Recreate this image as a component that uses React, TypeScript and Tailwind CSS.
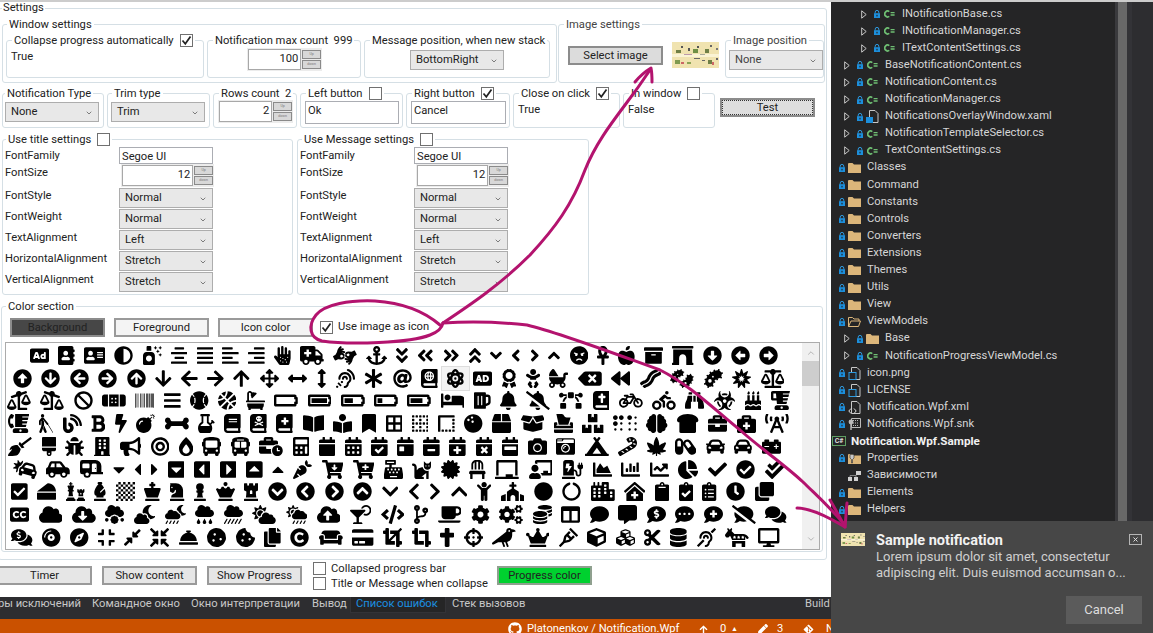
import React from "react";
import { ChevronDown, ChevronUp } from "lucide-react";
import type { IconType } from "react-icons";
import {
  FaAd, FaAddressBook, FaAddressCard, FaAdjust, FaAirFreshener, FaAlignCenter, FaAlignJustify, FaAlignLeft, FaAlignRight, FaAllergies, FaAmbulance, FaAmericanSignLanguageInterpreting, FaAnchor, FaAngleDoubleDown, FaAngleDoubleLeft, FaAngleDoubleRight, FaAngleDoubleUp, FaAngleDown, FaAngleLeft, FaAngleRight, FaAngleUp, FaAngry, FaAnkh, FaAppleAlt, FaArchive, FaArchway, FaArrowAltCircleDown, FaArrowAltCircleLeft, FaArrowAltCircleRight,
  FaArrowAltCircleUp, FaArrowCircleDown, FaArrowCircleLeft, FaArrowCircleRight, FaArrowCircleUp, FaArrowDown, FaArrowLeft, FaArrowRight, FaArrowUp, FaArrowsAlt, FaArrowsAltH, FaArrowsAltV, FaAssistiveListeningSystems, FaAsterisk, FaAt, FaAtlas, FaAtom, FaAudioDescription, FaAward, FaBaby, FaBabyCarriage, FaBackspace, FaBackward, FaBacon, FaBacteria, FaBacterium, FaBahai, FaBalanceScale,
  FaBalanceScaleLeft, FaBalanceScaleRight, FaBan, FaBandAid, FaBarcode, FaBars, FaBaseballBall, FaBasketballBall, FaBath, FaBatteryEmpty, FaBatteryFull, FaBatteryHalf, FaBatteryQuarter, FaBatteryThreeQuarters, FaBed, FaBeer, FaBell, FaBellSlash, FaBezierCurve, FaBible, FaBicycle, FaBiking, FaBinoculars, FaBiohazard, FaBirthdayCake, FaBlender,
  FaBlenderPhone, FaBlind, FaBlog, FaBold, FaBolt, FaBomb, FaBone, FaBong, FaBook, FaBookDead, FaBookMedical, FaBookOpen, FaBookReader, FaBookmark, FaBorderAll, FaBorderNone, FaBorderStyle, FaBowlingBall, FaBox, FaBoxOpen, FaBoxTissue, FaBoxes, FaBraille, FaBrain, FaBreadSlice, FaBriefcase, FaBriefcaseMedical, FaBroadcastTower,
  FaBroom, FaBrush, FaBug, FaBuilding, FaBullhorn, FaBullseye, FaBurn, FaBus, FaBusAlt, FaBusinessTime, FaCalculator, FaCalendar, FaCalendarAlt, FaCalendarCheck, FaCalendarDay, FaCalendarMinus, FaCalendarPlus, FaCalendarTimes, FaCalendarWeek, FaCamera, FaCameraRetro, FaCampground, FaCandyCane, FaCannabis, FaCapsules, FaCar, FaCarAlt, FaCarBattery,
  FaCarCrash, FaCarSide, FaCaravan, FaCaretDown, FaCaretLeft, FaCaretRight, FaCaretSquareDown, FaCaretSquareLeft, FaCaretSquareRight, FaCaretSquareUp, FaCaretUp, FaCarrot, FaCartArrowDown, FaCartPlus, FaCashRegister, FaCat, FaCertificate, FaChair, FaChalkboard, FaChalkboardTeacher, FaChargingStation, FaChartArea, FaChartBar, FaChartLine, FaChartPie, FaCheck, FaCheckCircle, FaCheckDouble,
  FaCheckSquare, FaCheese, FaChess, FaChessBishop, FaChessBoard, FaChessKing, FaChessKnight, FaChessPawn, FaChessQueen, FaChessRook, FaChevronCircleDown, FaChevronCircleLeft, FaChevronCircleRight, FaChevronCircleUp, FaChevronDown, FaChevronLeft, FaChevronRight, FaChevronUp, FaChild, FaChurch, FaCircle, FaCircleNotch, FaCity, FaClinicMedical, FaClipboard, FaClipboardCheck, FaClipboardList, FaClock, FaClone,
  FaClosedCaptioning, FaCloud, FaCloudDownloadAlt, FaCloudMeatball, FaCloudMoon, FaCloudMoonRain, FaCloudRain, FaCloudShowersHeavy, FaCloudSun, FaCloudSunRain, FaCloudUploadAlt, FaCocktail, FaCode, FaCodeBranch, FaCoffee, FaCog, FaCogs, FaCoins, FaColumns, FaComment, FaCommentAlt, FaCommentDollar, FaCommentDots, FaCommentMedical, FaCommentSlash, FaComments,
  FaCommentsDollar, FaCompactDisc, FaCompass, FaCompress, FaCompressAlt, FaCompressArrowsAlt, FaConciergeBell, FaCookie, FaCookieBite, FaCopy, FaCopyright, FaCouch, FaCreditCard, FaCrop, FaCropAlt, FaCross, FaCrosshairs, FaCrow, FaCrown, FaCrutch, FaCube, FaCubes, FaCut, FaDatabase, FaDeaf, FaDemocrat, FaDesktop,
  FaGithub, FaPen, FaGitAlt,
} from "react-icons/fa";

// -------- icon list (Font Awesome solid, in the alphabetical order of the picker) --------

const iconRows: IconType[][] = [
  [FaAd, FaAddressBook, FaAddressCard, FaAdjust, FaAirFreshener, FaAlignCenter, FaAlignJustify, FaAlignLeft, FaAlignRight, FaAllergies, FaAmbulance, FaAmericanSignLanguageInterpreting, FaAnchor, FaAngleDoubleDown, FaAngleDoubleLeft, FaAngleDoubleRight, FaAngleDoubleUp, FaAngleDown, FaAngleLeft, FaAngleRight, FaAngleUp, FaAngry, FaAnkh, FaAppleAlt, FaArchive, FaArchway, FaArrowAltCircleDown, FaArrowAltCircleLeft, FaArrowAltCircleRight],
  [FaArrowAltCircleUp, FaArrowCircleDown, FaArrowCircleLeft, FaArrowCircleRight, FaArrowCircleUp, FaArrowDown, FaArrowLeft, FaArrowRight, FaArrowUp, FaArrowsAlt, FaArrowsAltH, FaArrowsAltV, FaAssistiveListeningSystems, FaAsterisk, FaAt, FaAtlas, FaAtom, FaAudioDescription, FaAward, FaBaby, FaBabyCarriage, FaBackspace, FaBackward, FaBacon, FaBacteria, FaBacterium, FaBahai, FaBalanceScale],
  [FaBalanceScaleLeft, FaBalanceScaleRight, FaBan, FaBandAid, FaBarcode, FaBars, FaBaseballBall, FaBasketballBall, FaBath, FaBatteryEmpty, FaBatteryFull, FaBatteryHalf, FaBatteryQuarter, FaBatteryThreeQuarters, FaBed, FaBeer, FaBell, FaBellSlash, FaBezierCurve, FaBible, FaBicycle, FaBiking, FaBinoculars, FaBiohazard, FaBirthdayCake, FaBlender],
  [FaBlenderPhone, FaBlind, FaBlog, FaBold, FaBolt, FaBomb, FaBone, FaBong, FaBook, FaBookDead, FaBookMedical, FaBookOpen, FaBookReader, FaBookmark, FaBorderAll, FaBorderNone, FaBorderStyle, FaBowlingBall, FaBox, FaBoxOpen, FaBoxTissue, FaBoxes, FaBraille, FaBrain, FaBreadSlice, FaBriefcase, FaBriefcaseMedical, FaBroadcastTower],
  [FaBroom, FaBrush, FaBug, FaBuilding, FaBullhorn, FaBullseye, FaBurn, FaBus, FaBusAlt, FaBusinessTime, FaCalculator, FaCalendar, FaCalendarAlt, FaCalendarCheck, FaCalendarDay, FaCalendarMinus, FaCalendarPlus, FaCalendarTimes, FaCalendarWeek, FaCamera, FaCameraRetro, FaCampground, FaCandyCane, FaCannabis, FaCapsules, FaCar, FaCarAlt, FaCarBattery],
  [FaCarCrash, FaCarSide, FaCaravan, FaCaretDown, FaCaretLeft, FaCaretRight, FaCaretSquareDown, FaCaretSquareLeft, FaCaretSquareRight, FaCaretSquareUp, FaCaretUp, FaCarrot, FaCartArrowDown, FaCartPlus, FaCashRegister, FaCat, FaCertificate, FaChair, FaChalkboard, FaChalkboardTeacher, FaChargingStation, FaChartArea, FaChartBar, FaChartLine, FaChartPie, FaCheck, FaCheckCircle, FaCheckDouble],
  [FaCheckSquare, FaCheese, FaChess, FaChessBishop, FaChessBoard, FaChessKing, FaChessKnight, FaChessPawn, FaChessQueen, FaChessRook, FaChevronCircleDown, FaChevronCircleLeft, FaChevronCircleRight, FaChevronCircleUp, FaChevronDown, FaChevronLeft, FaChevronRight, FaChevronUp, FaChild, FaChurch, FaCircle, FaCircleNotch, FaCity, FaClinicMedical, FaClipboard, FaClipboardCheck, FaClipboardList, FaClock, FaClone],
  [FaClosedCaptioning, FaCloud, FaCloudDownloadAlt, FaCloudMeatball, FaCloudMoon, FaCloudMoonRain, FaCloudRain, FaCloudShowersHeavy, FaCloudSun, FaCloudSunRain, FaCloudUploadAlt, FaCocktail, FaCode, FaCodeBranch, FaCoffee, FaCog, FaCogs, FaCoins, FaColumns, FaComment, FaCommentAlt, FaCommentDollar, FaCommentDots, FaCommentMedical, FaCommentSlash, FaComments],
  [FaCommentsDollar, FaCompactDisc, FaCompass, FaCompress, FaCompressAlt, FaCompressArrowsAlt, FaConciergeBell, FaCookie, FaCookieBite, FaCopy, FaCopyright, FaCouch, FaCreditCard, FaCrop, FaCropAlt, FaCross, FaCrosshairs, FaCrow, FaCrown, FaCrutch, FaCube, FaCubes, FaCut, FaDatabase, FaDeaf, FaDemocrat, FaDesktop],
];

// rows are centred, these nudge the ones that sit off the common centre
const rowNudge = ["pl-[11px]", "", "", "", "pr-[8px]", "", "pr-[12px]", "", "pr-[6px]"];

// -------- small WPF-looking controls --------

function Check({ on = false }: { on?: boolean }) {
  return (
    <span className="inline-flex w-[13px] h-[13px] shrink-0 items-center justify-center border border-[#707070] bg-white">
      {on && (
        <svg width="11" height="11" viewBox="0 0 11 11">
          <path d="M1.5 5.5 L4.3 8.8 L9.5 1.5" fill="none" stroke="#222" strokeWidth="1.7" />
        </svg>
      )}
    </span>
  );
}

function Group({
  title,
  className = "",
  inset = "ml-[5px]",
  children,
}: {
  title: React.ReactNode;
  className?: string;
  inset?: string;
  children?: React.ReactNode;
}) {
  return (
    <fieldset className={"border border-[#d5dfe5] rounded-[3px] min-w-0 shrink-0 " + className}>
      <legend className={"h-4 px-[2px] pt-px flex items-center gap-[6px] leading-4 whitespace-nowrap " + inset}>{title}</legend>
      {children}
    </fieldset>
  );
}

function Select({ value, className = "" }: { value: string; className?: string }) {
  return (
    <div className={"h-5 w-[94px] flex items-center justify-between pl-[5px] pr-[5px] pt-px bg-[#e8e8e8] border border-[#adadad] " + className}>
      <span>{value}</span>
      <ChevronDown size={8} strokeWidth={2.5} className="text-[#666]" />
    </div>
  );
}

function Spinner({ value, className = "", boxWidth }: { value: string; className?: string; boxWidth: string }) {
  return (
    <div className={"flex h-[23px] items-stretch p-px bg-[#ececec] " + className}>
      <div className={"flex items-center justify-end pr-[2px] bg-white border border-[#a8a8a8] " + boxWidth}>{value}</div>
      <div className="w-[19px] ml-px flex flex-col gap-px py-[1px] text-[3.5px] leading-none text-[#777] text-center">
        <div className="flex-1 flex items-center justify-center bg-[#d8d8d8] border border-[#8a8a8a]">Up</div>
        <div className="flex-1 flex items-center justify-center bg-[#d8d8d8] border border-[#8a8a8a]">down</div>
      </div>
    </div>
  );
}

function TextBox({ value, className = "" }: { value: string; className?: string }) {
  return <div className={"bg-white border border-[#abadb3] px-[2px] pt-px leading-[15px] " + className}>{value}</div>;
}

// every button passes its own fill and border colour
function Btn({ children, className = "" }: { children: React.ReactNode; className?: string }) {
  return (
    <div className={"h-[19px] w-[95px] shrink-0 flex items-center justify-center pt-px border-2 " + className}>
      {children}
    </div>
  );
}

// tiny picture that the user selected as the notification image
function Thumb({ className = "" }: { className?: string }) {
  const marks = [
    [4, 8, 5, 3, "#6f7f46"], [9, 4, 2, 2, "#555"], [16, 6, 2, 3, "#555"], [21, 7, 5, 4, "#6f8f45"], [25, 4, 2, 2, "#555"],
    [33, 7, 4, 4, "#6f7f46"], [38, 3, 2, 2, "#666"], [44, 6, 2, 2, "#777"], [3, 18, 5, 4, "#7f9a50"], [9, 20, 3, 2, "#c66"],
    [15, 20, 4, 2, "#8aa456"], [22, 16, 6, 1, "#666"], [30, 18, 3, 1, "#666"], [36, 18, 4, 4, "#6f7f46"], [40, 20, 2, 3, "#c66"],
    [12, 12, 8, 1, "#b9a"], [28, 12, 5, 1, "#aa9"], [44, 16, 2, 2, "#666"],
  ] as const;
  return (
    <svg viewBox="0 0 47 26" preserveAspectRatio="none" className={className}>
      <rect width="47" height="26" fill="#f0e3b0" />
      <rect y="12" width="47" height="3" fill="#faf3d4" />
      {marks.map(([x, y, w, h, c], i) => (
        <rect key={i} x={x} y={y} width={w} height={h} fill={c} />
      ))}
    </svg>
  );
}

// -------- solution explorer --------

function Triangle() {
  return (
    <svg width="6" height="9" viewBox="0 0 6 9">
      <path d="M0.7 0.8 L5.2 4.5 L0.7 8.2 Z" fill="none" stroke="#c8c8c8" strokeWidth="1" />
    </svg>
  );
}

function Lock() {
  return (
    <svg width="6" height="8" viewBox="0 0 6 8">
      <path d="M1.2 3.4 V2.2 A1.8 1.8 0 0 1 4.8 2.2 V3.4" fill="none" stroke="#2f9be0" strokeWidth="1" />
      <rect y="3.2" width="6" height="4.8" fill="#1c8fdc" />
      <rect x="2.4" y="4.8" width="1.2" height="1.6" fill="#252526" />
    </svg>
  );
}

function FileIcon({ kind }: { kind: string }) {
  if (kind === "cs")
    return (
      <svg width="11" height="8" viewBox="0 0 11 8">
        <path d="M5.3 1.6 A2.9 2.9 0 1 0 5.3 6.4" fill="none" stroke="#6fbf73" strokeWidth="1.7" />
        <path d="M6.6 2.6 H10.6 M6.6 5 H10.6" stroke="#6fbf73" strokeWidth="1.3" />
      </svg>
    );
  if (kind === "folder")
    return (
      <svg width="13" height="10" viewBox="0 0 13 10">
        <path d="M0 1 Q0 0 1 0 H4.5 L6 1.5 H13 V10 H0 Z" fill="#dcb67a" />
      </svg>
    );
  if (kind === "open")
    return (
      <svg width="13" height="10" viewBox="0 0 13 10">
        <path d="M0.5 9.5 V0.5 H4.5 L6 2 H11 V4 M0.5 9.5 H10.5 L12.5 4 H3 L0.5 9.5 Z" fill="#252526" stroke="#dcb67a" strokeWidth="1" />
      </svg>
    );
  if (kind === "prop")
    return (
      <svg width="13" height="11" viewBox="0 0 13 11">
        <path d="M0 2 Q0 1 1 1 H4.5 L6 2.5 H13 V11 H0 Z" fill="#dcb67a" />
        <path d="M2 1.5 H6 V5 L4.5 6.5 V10 H3.5 V6.5 L2 5 Z" fill="#c8c8c8" stroke="#252526" strokeWidth=".6" />
      </svg>
    );
  if (kind === "dep")
    return (
      <svg width="13" height="10" viewBox="0 0 13 10">
        <rect x="8" y="0" width="5" height="4" fill="#d0d0d0" />
        <rect x="0" y="6" width="4" height="4" fill="#d0d0d0" />
        <rect x="6" y="6" width="4" height="4" fill="#d0d0d0" />
        <path d="M2 6 V4.5 H8 M8 6 V4" stroke="#999" strokeWidth=".8" fill="none" />
      </svg>
    );
  if (kind === "snk")
    return (
      <svg width="13" height="12" viewBox="0 0 13 12">
        <path d="M3.5 .5 H12.5 V9.5 H3.5 Z" fill="none" stroke="#bbb" />
        <path d="M5 2.5 H11 M5 5 H11 M5 7.5 H11" stroke="#bbb" strokeDasharray="1 1" />
        <circle cx="3" cy="4" r="2.4" fill="#bbb" />
        <path d="M3 6 V12" stroke="#bbb" strokeWidth="1.4" />
      </svg>
    );
  const blue = kind === "png" || kind === "file";
  return (
    <svg width="13" height="13" viewBox="0 0 13 13">
      <path d="M3.5 .5 H9 L12 3.5 V12.5 H3.5 Z" fill="none" stroke="#c8c8c8" />
      {kind === "xaml" && <rect x="0" y="7" width="7" height="6" fill="#1c8fdc" />}
      {kind === "xml" && <path d="M3 7.5 L.8 10 L3 12.5 M6 7.5 L8.2 10 L6 12.5" fill="none" stroke="#ddd" />}
      {blue && <rect x="1" y="5.5" width="7" height="7" fill="#252526" stroke="#2f9be0" />}
    </svg>
  );
}

const tree: { text: string; depth: 0 | 1 | 2; kind: string; noLock?: boolean }[] = [
  { text: "INotificationBase.cs", depth: 2, kind: "cs" },
  { text: "INotificationManager.cs", depth: 2, kind: "cs" },
  { text: "ITextContentSettings.cs", depth: 2, kind: "cs" },
  { text: "BaseNotificationContent.cs", depth: 1, kind: "cs" },
  { text: "NotificationContent.cs", depth: 1, kind: "cs" },
  { text: "NotificationManager.cs", depth: 1, kind: "cs" },
  { text: "NotificationsOverlayWindow.xaml", depth: 1, kind: "xaml" },
  { text: "NotificationTemplateSelector.cs", depth: 1, kind: "cs" },
  { text: "TextContentSettings.cs", depth: 1, kind: "cs" },
  { text: "Classes", depth: 0, kind: "folder" },
  { text: "Command", depth: 0, kind: "folder" },
  { text: "Constants", depth: 0, kind: "folder" },
  { text: "Controls", depth: 0, kind: "folder" },
  { text: "Converters", depth: 0, kind: "folder" },
  { text: "Extensions", depth: 0, kind: "folder" },
  { text: "Themes", depth: 0, kind: "folder" },
  { text: "Utils", depth: 0, kind: "folder" },
  { text: "View", depth: 0, kind: "folder" },
  { text: "ViewModels", depth: 0, kind: "open" },
  { text: "Base", depth: 1, kind: "folder" },
  { text: "NotificationProgressViewModel.cs", depth: 1, kind: "cs" },
  { text: "icon.png", depth: 0, kind: "png" },
  { text: "LICENSE", depth: 0, kind: "file" },
  { text: "Notification.Wpf.xml", depth: 0, kind: "xml" },
  { text: "Notifications.Wpf.snk", depth: 0, kind: "snk" },
  { text: "Notification.Wpf.Sample", depth: 0, kind: "project" },
  { text: "Properties", depth: 0, kind: "prop" },
  { text: "Зависимости", depth: 0, kind: "dep", noLock: true },
  { text: "Elements", depth: 0, kind: "folder" },
  { text: "Helpers", depth: 0, kind: "folder" },
];

function TreeRow({ text, depth, kind, noLock }: (typeof tree)[number]) {
  if (kind === "project") {
    return (
      <div className="h-[17.1px] flex items-center pl-[1px] font-bold text-[11.7px] text-[#f0f0f0]">
        <span className="w-[14px] h-[10px] mr-[5px] flex items-center justify-center border border-[#5f9f63] text-[7px] leading-none text-[#dcdcdc]">C#</span>
        {text}
      </div>
    );
  }
  const pad = depth === 2 ? "pl-[26px]" : depth === 1 ? "pl-[9px]" : "pl-[4px]";
  return (
    <div className={"h-[17.1px] flex items-center whitespace-nowrap " + pad}>
      {depth > 0 && (
        <span className="w-[13px] flex justify-center">
          <Triangle />
        </span>
      )}
      <span className="w-[13px] flex justify-center">{!noLock && <Lock />}</span>
      <span className="w-[13px] mr-[6px] flex justify-center">
        <FileIcon kind={kind} />
      </span>
      {text}
    </div>
  );
}

// -------- the settings window --------

function FontRows() {
  return (
    <div className="pl-[2px]">
      <div className="flex h-[17px]">
        <span className="w-[114px] pt-px leading-4">FontFamily</span>
        <TextBox value="Segoe UI" className="w-[94px] h-[17px]" />
      </div>
      <div className="flex h-[24px]">
        <span className="w-[116px] pt-px leading-4">FontSize</span>
        <Spinner value="12" boxWidth="w-[72px]" className="w-[93px]" />
      </div>
      {[
        ["FontStyle", "Normal"],
        ["FontWeight", "Normal"],
        ["TextAlignment", "Left"],
        ["HorizontalAlignment", "Stretch"],
        ["VerticalAlignment", "Stretch"],
      ].map(([label, value]) => (
        <div key={label} className="flex h-[21px]">
          <span className="w-[114px] leading-4">{label}</span>
          <Select value={value} />
        </div>
      ))}
    </div>
  );
}

function IconList() {
  return (
    <div className="ml-[3px] mt-[5px] w-[815px] h-[208px] flex border border-[#ababab] bg-white">
      <div className="w-[785px] pt-px">
        {iconRows.map((row, r) => (
          <div key={r} className={"h-[22.75px] flex justify-center " + rowNudge[r]}>
            {row.map((Icon, i) => (
              <span
                key={i}
                className={
                  "h-[22.75px] shrink-0 flex items-center " +
                  (r === 0 ? "px-[4.6px] " : "px-[4.75px] ") +
                  (Icon === FaAtom ? "bg-[#f3f3f3] outline outline-[#dddddd]" : "")
                }
              >
                <Icon size="auto" className="h-[19px] w-auto text-black" />
              </span>
            ))}
          </div>
        ))}
      </div>
      <div className="ml-auto w-[17px] bg-[#f0f0f0] flex flex-col items-center py-[5px]">
        <ChevronUp size={10} strokeWidth={2} className="text-[#aaa]" />
        <div className="w-full h-[25px] mt-[3px] bg-[#cdcdcd]" />
        <ChevronDown size={10} strokeWidth={2} className="text-[#aaa] mt-auto" />
      </div>
    </div>
  );
}

function SettingsWindow() {
  return (
    <div className="w-[831px] h-[595px] shrink-0 overflow-hidden bg-white text-[#222]">
      <fieldset className="border border-[#d5dfe5] rounded-[3px] w-[829px] h-[558px] -ml-[2px]">
        <legend className="ml-[3px] px-[1px] h-3 leading-3">Settings</legend>
        <div className="pl-[3px] pt-[2px]">
          {/* first row: window settings + image settings */}
          <div className="flex gap-px">
            <Group title="Window settings" inset="ml-[4px]" className="w-[555px] h-[67px]">
              <div className="flex gap-[3px] pl-[3px]">
                <Group title={<>Collapse progress automatically<Check on /></>} className="w-[198px] h-[46px]">
                  <div className="pl-1 pt-px leading-4">True</div>
                </Group>
                <Group title={"Notification max count\u00a0\u00a0999"} className="w-[154px] h-[46px]">
                  <Spinner value="100" boxWidth="w-[54px]" className="ml-[39px] w-[75px]" />
                </Group>
                <Group title="Message position, when new stack" className="w-[186px] h-[46px]">
                  <Select value="BottomRight" className="ml-[45px] mt-[2px]" />
                </Group>
              </div>
            </Group>
            <Group title="Image settings" className="w-[267px] h-[67px] text-[#444]">
              <div className="flex">
                <Btn className="ml-[9px] mt-[14px] text-[#222] border-[#8c8c8c] bg-[#dcdcdc]">Select image</Btn>
                <Thumb className="ml-[9px] mt-[10px] w-[47px] h-[26px]" />
                <Group title="Image position" className="ml-[6px] w-[99px] h-[46px]">
                  <Select value="None" className="ml-[3px] mt-[2px]" />
                </Group>
              </div>
            </Group>
          </div>

          {/* second row */}
          <div className="flex gap-[3px] mt-[2px] text-[#222]">
            <Group title="Notification Type" inset="ml-[2px]" className="w-[102px] h-[43px]">
              <Select value="None" className="ml-[2px] mt-px" />
            </Group>
            <Group title="Trim type" inset="ml-[4px]" className="w-[103px] h-[43px]">
              <Select value="Trim" className="ml-[3px] mt-px" />
            </Group>
            <Group title={"Rows count\u00a0\u00a02"} className="w-[84px] h-[43px]">
              <Spinner value="2" boxWidth="w-[54px]" className="ml-[4px] w-[75px] -mt-px" />
            </Group>
            <Group title={<>Left button<Check /></>} className="w-[103px] h-[43px]">
              <TextBox value="Ok" className="ml-[4px] w-[94px] h-[23px]" />
            </Group>
            <Group title={<>Right button<Check on /></>} className="w-[104px] h-[43px]">
              <TextBox value="Cancel" className="ml-[4px] w-[95px] h-[23px]" />
            </Group>
            <Group title={<>Close on click<Check on /></>} className="w-[107px] h-[43px]">
              <div className="pl-1 pt-px leading-4">True</div>
            </Group>
            <Group title={<>In window<Check /></>} className="w-[92px] h-[43px]">
              <div className="pl-1 pt-px leading-4">False</div>
            </Group>
            <Btn className="ml-[2px] mt-[13px] border-[#8c8c8c] bg-[#dedede] outline-1 outline-dotted -outline-offset-3 outline-[#333]">Test</Btn>
          </div>

          {/* third row: font settings */}
          <div className="flex gap-1 mt-[3px]">
            <Group title={<>Use title settings<Check /></>} inset="ml-[3px]" className="w-[291px] h-[164px]">
              <FontRows />
            </Group>
            <Group title={<>Use Message settings<Check /></>} inset="ml-[4px]" className="w-[292px] h-[164px]">
              <FontRows />
            </Group>
          </div>

          {/* colors and icons */}
          <Group title="Color section" inset="ml-[4px]" className="-ml-[1px] mt-[3px] w-[822px] h-[254px]">
            <div className="flex items-center gap-[9px] pl-[8px] pt-[4px]">
              <Btn className="bg-[#474747] text-[#222] border-[#8c8c8c]">Background</Btn>
              <Btn className="bg-[#f4f4f4] border-[#9a9a9a]">Foreground</Btn>
              <Btn className="bg-[#f4f4f4] border-[#9a9a9a]">Icon color</Btn>
              <span className="flex items-center gap-[5px] -ml-[2px]">
                <Check on />
                Use image as icon
              </span>
            </div>
            <IconList />
          </Group>
        </div>
      </fieldset>

      {/* bottom row of buttons */}
      <div className="flex items-start h-[37px] pt-[6px] -ml-[3px]">
        <Btn className="bg-[#e6e6e6] border-[#9a9a9a]">Timer</Btn>
        <Btn className="ml-[10px] bg-[#e6e6e6] border-[#9a9a9a]">Show content</Btn>
        <Btn className="ml-[10px] bg-[#e6e6e6] border-[#9a9a9a]">Show Progress</Btn>
        <div className="ml-[11px] -mt-[4px] flex flex-col gap-[2px] w-[184px] leading-[13px] whitespace-nowrap">
          <span className="flex items-center gap-[5px]"><Check />Collapsed progress bar</span>
          <span className="flex items-center gap-[5px]"><Check />Title or Message when collapse</span>
        </div>
        <Btn className="bg-[#00d12f] border-[#8fa08f]">Progress color</Btn>
      </div>
    </div>
  );
}

function SolutionExplorer() {
  return (
    <div className="flex-1 flex text-[#d6d6d6] bg-[#2d2d30]">
      <div className="w-[284px] h-full pt-[3.5px] bg-[#252526] overflow-hidden">
        {tree.map((row) => (
          <TreeRow key={row.text} {...row} />
        ))}
      </div>
      <div className="w-[12px] h-full bg-[#3a3a3d] pl-[3px]">
        <div className="w-[9px] h-full bg-[#686868]" />
      </div>
      <div className="w-[5px] h-full bg-[#333337]" />
    </div>
  );
}

function Notification() {
  return (
    <div className="absolute left-[831px] top-[519px] w-[322px] h-[112px] bg-[#474747] z-10">
      <div className="flex pt-[12px] pl-[10px] pr-[11px]">
        <Thumb className="w-[24px] h-[13px] shrink-0" />
        <div className="ml-[11px] flex-1 leading-[16px] text-[#cfcfcf] whitespace-nowrap">
          <div className="text-[14.5px] font-bold text-[#f2f2f2]">Sample notification</div>
          <div className="text-[13px]">Lorem ipsum dolor sit amet, consectetur</div>
          <div className="text-[13px]">adipiscing elit. Duis euismod accumsan o...</div>
        </div>
        <span className="w-[13px] h-[11px] mt-px shrink-0 border border-[#b5b5b5] flex items-center justify-center">
          <svg width="5" height="5" viewBox="0 0 5 5">
            <path d="M0.5 0.5 L4.5 4.5 M4.5 0.5 L0.5 4.5" stroke="#ddd" strokeWidth="1" />
          </svg>
        </span>
      </div>
      <div className="flex justify-end pr-[11px] mt-[15px]">
        <div className="w-[76px] h-[28px] flex items-center justify-center bg-[#5b5b5b] text-[13px] text-[#dddddd]">Cancel</div>
      </div>
    </div>
  );
}

// the hand-drawn arrows on top of the screenshot
function Annotation() {
  return (
    <svg viewBox="0 0 1153 633" className="absolute left-0 -top-[2px] w-[1153px] h-[633px] z-20 pointer-events-none">
      <g fill="none" stroke="#b3136e" strokeWidth="3" strokeLinecap="round" strokeLinejoin="round">
        <path d="M440 325 C425 312 405 303 375 301 C350 300 325 304 316 315 C308 325 309 338 322 341 C350 345 410 343 430 335 C438 332 442 328 443 323" />
        <path d="M443 323 C470 305 500 285 530 255 C555 228 572 205 585 170 C595 145 610 125 625 105 C635 92 642 82 650 70" />
        <path d="M635 82 C640 76 646 71 651 68 C652 73 652 78 652 82" />
        <path d="M443 323 C470 321 500 322 527 325 C560 333 610 352 660 370 C690 385 715 410 740 430 C760 448 785 465 803 482 C815 494 825 502 845 525" />
        <path d="M797 508 C810 508 825 515 845 527 C846 518 846 510 847 503" />
        <path d="M830 500 C836 510 840 518 845 527" />
      </g>
    </svg>
  );
}

export default function App() {
  return (
    <div className="relative w-[1153px] h-[633px] overflow-hidden bg-white border-t-2 border-[#cccccc] font-['Roboto',sans-serif] text-[11.2px]">
      <div className="flex h-[595px]">
        <SettingsWindow />
        <SolutionExplorer />
      </div>

      {/* output tabs */}
      <div className="h-[22px] flex bg-[#2d2d30] text-[#c8c8c8] leading-[13px] whitespace-nowrap">
        <div className="w-[81px] flex justify-end overflow-hidden">ры исключений</div>
        <span className="ml-[11px] w-[99px]">Командное окно</span>
        <span className="w-[121px]">Окно интерпретации</span>
        <span className="w-[38px]">Вывод</span>
        <span className="w-[96px] h-[16px] pl-[5px] bg-[#252526] border border-t-0 border-[#333337] text-[#1b8fe0]">Список ошибок</span>
        <span className="ml-[6px] w-[353px]">Стек вызовов</span>
        <span>Build</span>
      </div>

      {/* status bar, cut off by the window edge */}
      <div className="h-[14px] flex items-start pl-[508px] pt-[3px] bg-[#ca5100] text-white leading-[14px] whitespace-nowrap overflow-hidden">
        <FaGithub className="w-[14px] h-[14px] mr-[5px] shrink-0" />
        <span className="w-[172px]">Platonenkov / Notification.Wpf</span>
        <FaArrowUp className="w-[9px] h-[9px] mt-[3px] shrink-0" />
        <span className="ml-[12px] w-[11px]">0</span>
        <span className="w-[27px] text-[7px]">▲</span>
        <FaPen className="w-[10px] h-[10px] mt-[2px] shrink-0" />
        <span className="ml-[9px] w-[26px]">3</span>
        <FaGitAlt className="w-[11px] h-[11px] mt-[2px] shrink-0" />
        <span className="ml-[12px]">N</span>
      </div>

      <Notification />
      <Annotation />
    </div>
  );
}
